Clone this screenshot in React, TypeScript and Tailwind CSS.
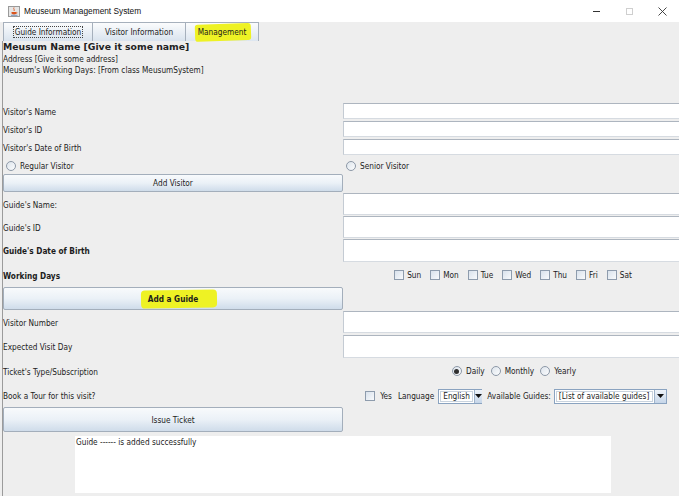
import React from "react";

const Field = () => (
  <div className="flex-1 bg-white border-t border-b border-l border-t-[#adb5bf] border-b-[#d6dbe1] border-l-[#c4cbd3]" />
);

const Btn = ({ children }: { children: React.ReactNode }) => (
  <div className="w-[340px] h-full border border-[#a3aebb] rounded-[2px] bg-linear-to-b from-[#f8fafc] via-[#ebf1f7] to-[#cfdcea] flex items-center justify-center pt-[1px]">
    {children}
  </div>
);

const Radio = ({ checked = false }: { checked?: boolean }) => (
  <span className="w-[10px] h-[10px] rounded-full border border-[#8c98a7] bg-linear-to-br from-[#dde4ec] to-[#fbfcfd] flex items-center justify-center shrink-0">
    {checked && <span className="w-[5px] h-[5px] rounded-full bg-[#2f2f2f]" />}
  </span>
);

const Check = () => (
  <span className="w-[10px] h-[10px] border border-[#8e9cad] bg-linear-to-br from-[#d9e2ec] to-[#f8fafc] shrink-0" />
);

const Arrow = () => (
  <svg width="7" height="4" viewBox="0 0 7 4">
    <path d="M0 0 H7 L3.5 4 Z" fill="#111" />
  </svg>
);

const Combo = ({ text, w }: { text: string; w: string }) => (
  <div className={`flex h-[15px] border border-[#8aa3c0] bg-white ${w}`}>
    <span className="flex-1 flex items-center px-[2px] m-[1px] border border-[#c9d3de]">{text}</span>
    <span className="w-[12px] bg-linear-to-b from-[#eef3f9] to-[#c6d6e9] border-l border-[#9fb3cb] flex items-center justify-center">
      <Arrow />
    </span>
  </div>
);

const Row = ({
  h,
  label,
  bold = false,
  children,
}: {
  h: string;
  label?: string;
  bold?: boolean;
  children?: React.ReactNode;
}) => (
  <div className={`flex ${h}`}>
    <div className={`w-[340px] flex items-center pt-[3px] ${bold ? "font-bold" : ""}`}>{label}</div>
    <div className="flex-1 flex">{children}</div>
  </div>
);

export default function App() {
  return (
    <div className="w-[679px] h-[496px] overflow-hidden bg-[#eeeeee] text-[8.2px] text-[#1c1c1c] font-['DejaVu_Sans_Condensed','DejaVu_Sans',sans-serif] flex flex-col">
      {/* Title bar */}
      <div className="h-[22px] bg-white flex items-center shrink-0">
        <div className="ml-[8px] w-[12px] h-[11px] border border-[#9a9a9a] bg-[#e6e6e6] flex items-center justify-center">
          <svg width="9" height="9" viewBox="0 0 9 9">
            <path d="M4 0.5 C3 2 5 2.5 4 4" stroke="#d9541e" strokeWidth="0.9" fill="none" />
            <path d="M1.5 5 H6.5 V6.5 Q4 8.5 1.5 6.5 Z" fill="#d9541e" />
            <path d="M6.5 5.3 Q8 5.6 6.5 6.6" stroke="#d9541e" strokeWidth="0.7" fill="none" />
            <path d="M1 8.3 H7.5" stroke="#5a7fb0" strokeWidth="0.8" />
          </svg>
        </div>
        <span className="ml-[4px] text-[8.3px] text-[#111] font-['Liberation_Sans',sans-serif]">
          Meuseum Management System
        </span>
        <div className="ml-auto flex items-center h-full">
          <div className="w-[33px] flex justify-center">
            <span className="w-[7px] h-px bg-[#333]" />
          </div>
          <div className="w-[33px] flex justify-center">
            <span className="w-[7px] h-[7px] border border-[#cfcfcf]" />
          </div>
          <div className="w-[33px] flex justify-center">
            <svg width="9" height="9" viewBox="0 0 9 9">
              <path d="M0.5 0.5 L8.5 8.5 M8.5 0.5 L0.5 8.5" stroke="#333" strokeWidth="0.9" />
            </svg>
          </div>
        </div>
      </div>

      {/* Tabs */}
      <div className="h-[19px] flex pl-[3px] shrink-0">
        <div className="w-[90px] h-full border border-[#a6b0bc] border-b-0 bg-linear-to-b from-[#fbfcfd] to-[#d9e3ee] flex items-center justify-center">
          <span className="border border-dotted border-[#444] px-[1px] leading-[10px]">Guide Information</span>
        </div>
        <div className="w-[93px] h-full border border-[#a6b0bc] border-b-0 border-l-0 bg-linear-to-b from-[#fbfcfd] to-[#d9e3ee] flex items-center justify-center">
          Visitor Information
        </div>
        <div className="w-[73px] h-full border border-[#a6b0bc] border-b-0 border-l-0 bg-linear-to-b from-[#fbfcfd] to-[#dde6f0] flex items-center justify-center">
          <span className="relative">
            <span className="absolute -left-[3px] -right-[4px] -top-[2px] -bottom-[3px] bg-[#eef224] rounded-[3px] -rotate-2" />
            <span className="relative">Management</span>
          </span>
        </div>
      </div>

      {/* Content */}
      <div className="flex-1 ml-[2px] border-l border-[#9b9b9b] flex flex-col">
        <div className="h-[61px] flex flex-col leading-[11px]">
          <div className="font-['DejaVu_Sans',sans-serif] font-bold text-[9.3px] leading-[12px] text-[#222]">
            Meusum Name [Give it some name]
          </div>
          <div className="pt-[1px]">Address [Give it some address]</div>
          <div>Meusum's Working Days: [From class MeusumSystem]</div>
        </div>

        <Row h="h-[18px]" label="Visitor's Name">
          <div className="flex-1 flex py-[1px]"><Field /></div>
        </Row>
        <Row h="h-[18px]" label="Visitor's ID">
          <div className="flex-1 flex py-[1px]"><Field /></div>
        </Row>
        <Row h="h-[18px]" label="Visitor's Date of Birth">
          <div className="flex-1 flex py-[1px]"><Field /></div>
        </Row>

        <div className="flex h-[18px] pt-[2px]">
          <div className="w-[340px] flex items-center pl-[3px] gap-[4px]">
            <Radio />
            <span>Regular Visitor</span>
          </div>
          <div className="flex-1 flex items-center pl-[3px] gap-[4px]">
            <Radio />
            <span>Senior Visitor</span>
          </div>
        </div>

        <div className="flex h-[18px]">
          <Btn>Add Visitor</Btn>
        </div>

        <Row h="h-[23px]" label="Guide's Name:">
          <div className="flex-1 flex pt-[1px]"><Field /></div>
        </Row>
        <Row h="h-[23px]" label="Guide's ID">
          <div className="flex-1 flex pt-[1px]"><Field /></div>
        </Row>
        <Row h="h-[24px]" label="Guide's Date of Birth" bold>
          <div className="flex-1 flex pt-[1px]"><Field /></div>
        </Row>

        <Row h="h-[25px]" label="Working Days" bold>
          <div className="flex-1 flex items-center justify-center gap-[9px] pl-[4px] pt-[2px]">
            {["Sun", "Mon", "Tue", "Wed", "Thu", "Fri", "Sat"].map((d) => (
              <div key={d} className="flex items-center gap-[3px]">
                <Check />
                <span>{d}</span>
              </div>
            ))}
          </div>
        </Row>

        <div className="flex h-[23px]">
          <Btn>
            <span className="relative font-bold">
              <span className="absolute -left-[7px] -right-[19px] -top-[3px] -bottom-[3px] bg-[#eef224] rounded-[4px] -rotate-1" />
              <span className="relative">Add a Guide</span>
            </span>
          </Btn>
        </div>

        <Row h="h-[24px]" label="Visitor Number">
          <div className="flex-1 flex pt-[1px] pb-[1px]"><Field /></div>
        </Row>
        <Row h="h-[24px]" label="Expected Visit Day">
          <div className="flex-1 flex pt-[1px]"><Field /></div>
        </Row>

        <Row h="h-[25px]" label="Ticket's Type/Subscription">
          <div className="flex-1 flex items-center justify-center gap-[6px] pl-[6px] pt-[2px]">
            <div className="flex items-center gap-[4px]"><Radio checked /><span>Daily</span></div>
            <div className="flex items-center gap-[4px]"><Radio /><span>Monthly</span></div>
            <div className="flex items-center gap-[4px]"><Radio /><span>Yearly</span></div>
          </div>
        </Row>

        <Row h="h-[24px]" label="Book a Tour for this visit?">
          <div className="flex-1 flex items-center justify-center pl-[10px] pt-[2px]">
            <Check />
            <span className="ml-[5px]">Yes</span>
            <span className="ml-[6px]">Language</span>
            <Combo text="English" w="ml-[4px] w-[44px]" />
            <span className="ml-[5px]">Available Guides:</span>
            <Combo text="[List of available guides]" w="ml-[3px] w-[113px]" />
          </div>
        </Row>

        <div className="flex h-[25px]">
          <Btn>Issue Ticket</Btn>
        </div>

        <div className="flex-1 pt-[4px] pl-[72px]">
          <div className="w-[536px] h-[57px] bg-white px-[1px] pt-[1px] leading-[11px]">
            Guide ------ is added successfully
          </div>
        </div>
      </div>
    </div>
  );
}
